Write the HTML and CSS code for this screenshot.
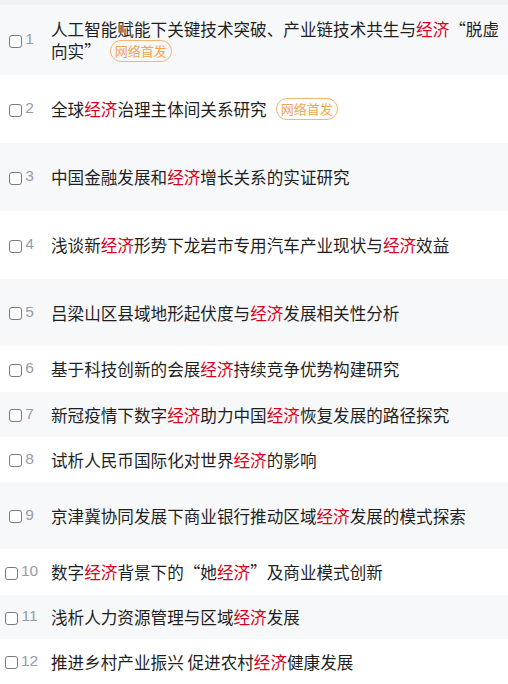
FILE: index.html
```html
<!DOCTYPE html>
<html lang="zh-CN">
<head>
<meta charset="utf-8">
<link rel="stylesheet" href="styles.css">
</head>
<body>
<div class="topbar"></div>
<ul class="list">
  <li class="row grey p70"><div class="idx"><span class="cb"></span><span class="num">1</span></div><div class="title">人工智能赋能下关键技术突破、产业链技术共生与<em>经济</em>“脱虚向实”<span class="badge">网络首发</span></div></li>
  <li class="row tall"><div class="idx"><span class="cb"></span><span class="num">2</span></div><div class="title">全球<em>经济</em>治理主体间关系研究<span class="badge">网络首发</span></div></li>
  <li class="row grey tall"><div class="idx"><span class="cb"></span><span class="num">3</span></div><div class="title">中国金融发展和<em>经济</em>增长关系的实证研究</div></li>
  <li class="row tall"><div class="idx"><span class="cb"></span><span class="num">4</span></div><div class="title">浅谈新<em>经济</em>形势下龙岩市专用汽车产业现状与<em>经济</em>效益</div></li>
  <li class="row grey tall67"><div class="idx"><span class="cb"></span><span class="num">5</span></div><div class="title">吕梁山区县域地形起伏度与<em>经济</em>发展相关性分析</div></li>
  <li class="row short46"><div class="idx"><span class="cb"></span><span class="num">6</span></div><div class="title">基于科技创新的会展<em>经济</em>持续竞争优势构建研究</div></li>
  <li class="row grey short"><div class="idx"><span class="cb"></span><span class="num">7</span></div><div class="title">新冠疫情下数字<em>经济</em>助力中国<em>经济</em>恢复发展的路径探究</div></li>
  <li class="row short"><div class="idx"><span class="cb"></span><span class="num">8</span></div><div class="title">试析人民币国际化对世界<em>经济</em>的影响</div></li>
  <li class="row grey tall67"><div class="idx"><span class="cb"></span><span class="num">9</span></div><div class="title">京津冀协同发展下商业银行推动区域<em>经济</em>发展的模式探索</div></li>
  <li class="row short46"><div class="idx"><span class="cb"></span><span class="num">10</span></div><div class="title">数字<em>经济</em>背景下的“她<em>经济</em>”及商业模式创新</div></li>
  <li class="row grey short44"><div class="idx"><span class="cb"></span><span class="num">11</span></div><div class="title">浅析人力资源管理与区域<em>经济</em>发展</div></li>
  <li class="row short"><div class="idx"><span class="cb"></span><span class="num">12</span></div><div class="title">推进乡村产业振兴 促进农村<em>经济</em>健康发展</div></li>
</ul>
</body>
</html>
```

FILE: styles.css
```css
* { box-sizing: border-box; }
html, body { margin: 0; padding: 0; background: #fff; }
body {
  width: 508px;
  font-family: "Noto Sans CJK SC", "Microsoft YaHei", sans-serif;
  color: #1f1f1f;
  overflow: hidden;
}
.topbar { height: 5px; background: #f1f1f1; }
.list { list-style: none; margin: 0; padding: 0; }
.row {
  display: flex;
  align-items: center;
  background: #fff;
}
.row.grey { background: #f7f8fa; }
.p70 { height: 70px; }
.tall { height: 68px; }
.tall67 { height: 67px; }
.short46 { height: 46px; }
.short { height: 45px; }
.short44 { height: 44px; }
.idx {
  width: 43px;
  flex: none;
  display: flex;
  justify-content: center;
  align-items: center;
}
.cb {
  display: block;
  width: 13px;
  height: 13px;
  margin-right: 3px;
  border: 1px solid #7a7a7a;
  border-radius: 3px;
  background: #fff;
  position: relative;
  top: 1px;
}
.num {
  font-family: "Liberation Sans", Arial, sans-serif;
  font-size: 15.5px;
  line-height: 16px;
  color: #959bad;
  position: relative;
  top: -1px;
}
.title {
  flex: 1;
  padding-left: 8px;
  padding-right: 4px;
  font-size: 16.6px;
  line-height: 22px;
}
.title em { font-style: normal; color: #d9001b; }
.badge {
  display: inline-block;
  margin-left: 9px;
  padding: 0 4px;
  height: 22px;
  line-height: 20px;
  border: 1px solid #f6b46c;
  border-radius: 11px;
  color: #f2a452;
  font-size: 13px;
  vertical-align: top;
}
```
